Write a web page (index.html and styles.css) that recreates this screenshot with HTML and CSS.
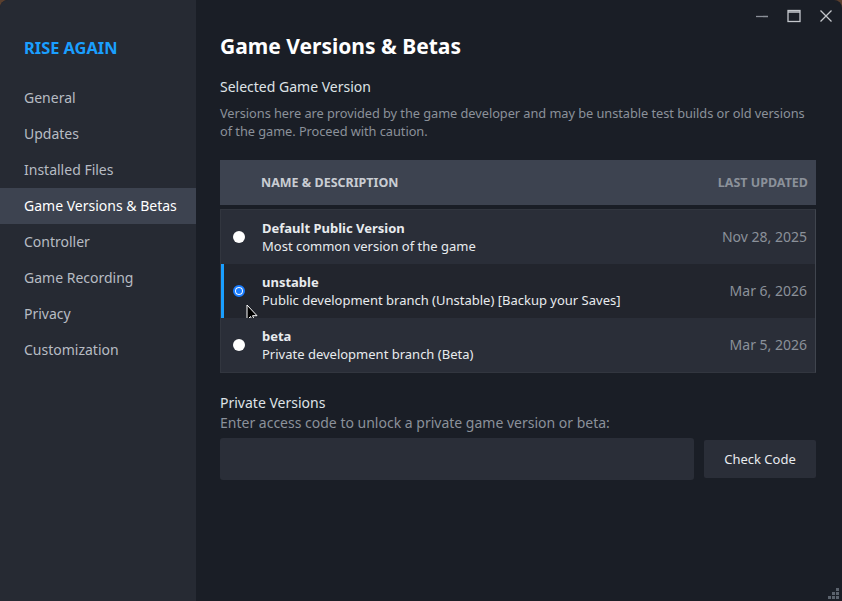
FILE: index.html
```html
<!DOCTYPE html>
<html>
<head>
<meta charset="utf-8">
<link rel="stylesheet" href="styles.css">
</head>
<body>
<div class="window">
  <aside class="sidebar">
    <div class="game-title">RISE AGAIN</div>
    <nav class="nav">
      <div class="nav-item">General</div>
      <div class="nav-item">Updates</div>
      <div class="nav-item">Installed Files</div>
      <div class="nav-item active">Game Versions &amp; Betas</div>
      <div class="nav-item">Controller</div>
      <div class="nav-item">Game Recording</div>
      <div class="nav-item">Privacy</div>
      <div class="nav-item">Customization</div>
    </nav>
  </aside>
  <main class="main">
    <div class="winctl">
      <svg width="14" height="14" viewBox="0 0 14 14"><path d="M1 7.5h12" stroke="#8b9098" stroke-width="1.3"/></svg>
      <svg width="14" height="14" viewBox="0 0 14 14"><rect x="1" y="1.5" width="12" height="11" fill="none" stroke="#c4c7cc" stroke-width="1.3"/><path d="M1 3h12" stroke="#c4c7cc" stroke-width="1.3"/></svg>
      <svg width="14" height="14" viewBox="0 0 14 14"><path d="M1.5 1.5l11 11M12.5 1.5l-11 11" stroke="#c4c7cc" stroke-width="1.3"/></svg>
    </div>
    <h1 class="title">Game Versions &amp; Betas</h1>
    <h2 class="subtitle">Selected Game Version</h2>
    <p class="desc">Versions here are provided by the game developer and may be unstable test builds or old versions of the game. Proceed with caution.</p>
    <div class="thead">
      <span class="th-name">NAME &amp; DESCRIPTION</span>
      <span class="th-date">LAST UPDATED</span>
    </div>
    <div class="tbody">
      <div class="row">
        <span class="radio"></span>
        <div class="info"><div class="name">Default Public Version</div><div class="rdesc">Most common version of the game</div></div>
        <span class="date">Nov 28, 2025</span>
      </div>
      <div class="row alt selected">
        <span class="radio on"></span>
        <div class="info"><div class="name">unstable</div><div class="rdesc">Public development branch (Unstable) [Backup your Saves]</div></div>
        <span class="date">Mar 6, 2026</span>
        <svg class="cursor" width="12" height="19" viewBox="0 0 12 19"><path d="M1 1v15l3.5-3.5 2.5 5.5 2-1-2.5-5.3H11z" fill="#000" stroke="#fff" stroke-width="1"/></svg>
      </div>
      <div class="row">
        <span class="radio"></span>
        <div class="info"><div class="name">beta</div><div class="rdesc">Private development branch (Beta)</div></div>
        <span class="date">Mar 5, 2026</span>
      </div>
    </div>
    <h2 class="subtitle private">Private Versions</h2>
    <p class="hint">Enter access code to unlock a private game version or beta:</p>
    <div class="code-row">
      <div class="code-input"></div>
      <button class="check-btn">Check Code</button>
    </div>
    <svg class="grip" width="14" height="14" viewBox="0 0 14 14" fill="#5b626c"><rect x="10" y="2" width="3" height="3"/><rect x="6" y="6" width="3" height="3"/><rect x="10" y="6" width="3" height="3"/><rect x="2" y="10" width="3" height="3"/><rect x="6" y="10" width="3" height="3"/><rect x="10" y="10" width="3" height="3"/></svg>
  </main>
</div>
</body>
</html>
```

FILE: styles.css
```css
* { box-sizing: border-box; }
html, body {
  margin: 0;
  padding: 0;
  width: 842px;
  height: 601px;
  overflow: hidden;
  background: #5a3f2e;
}
body {
  font-family: "Noto Sans", "Open Sans", Arial, sans-serif;
}
.window {
  display: flex;
  width: 842px;
  height: 601px;
  border-radius: 8px 8px 0 0;
  overflow: hidden;
  background: #1a1e26;
}
.sidebar {
  width: 196px;
  flex: none;
  background: #262a33;
  padding-top: 36px;
}
.game-title {
  color: #1a9fff;
  font-weight: 700;
  font-size: 16.4px;
  line-height: 24px;
  padding-left: 24px;
}
.nav {
  margin-top: 20px;
}
.nav-item {
  height: 36px;
  line-height: 36px;
  padding-left: 24px;
  color: #b7bcc3;
  font-size: 14px;
}
.nav-item.active {
  background: #3d4350;
  color: #ffffff;
}
.main {
  flex: 1;
  position: relative;
  padding: 0 26px 0 24px;
}
.winctl {
  position: absolute;
  top: 9px;
  right: 9px;
  display: flex;
  gap: 18px;
}
.title {
  margin: 32px 0 0;
  font-size: 21px;
  line-height: 28px;
  font-weight: 700;
  color: #ffffff;
}
.subtitle {
  margin: 17px 0 0;
  font-size: 14px;
  line-height: 20px;
  font-weight: 400;
  color: #dfe3e6;
}
.desc {
  margin: 7px 0 0;
  font-size: 12.8px;
  line-height: 18px;
  letter-spacing: -0.05px;
  color: #8b919a;
}
.thead {
  margin-top: 20px;
  height: 45px;
  background: #3d4350;
  display: flex;
  align-items: center;
  justify-content: space-between;
  padding: 0 8px 0 41px;
  font-size: 12.5px;
  font-weight: 700;
}
.th-name { color: #c9cdd3; }
.th-date { color: #8b919a; }
.tbody {
  margin-top: 4px;
  border: 1px solid #32363f;
  border-right-color: #40454e;
}
.row {
  position: relative;
  height: 54px;
  display: flex;
  align-items: center;
  background: #2a2e38;
  padding: 0 8px 0 12px;
}
.row.alt { background: #22252d; }
.row.selected { box-shadow: inset 3px 0 0 #1a9fff; }
.radio {
  width: 12px;
  height: 12px;
  border-radius: 50%;
  background: #ffffff;
  flex: none;
}
.radio.on {
  background: #ffffff;
  border: 2px solid #1a7dff;
  box-shadow: inset 0 0 0 1px #ffffff, inset 0 0 0 6px #1a7dff;
}
.info {
  margin-left: 17px;
  flex: 1;
}
.name {
  font-size: 13px;
  line-height: 18px;
  font-weight: 700;
  color: #e8ebee;
}
.rdesc {
  font-size: 13px;
  line-height: 18px;
  color: #e8ebee;
}
.date {
  font-size: 14px;
  color: #8b919a;
  margin-top: -1px;
}
.cursor {
  position: absolute;
  left: 25px;
  top: 40px;
}
.private { margin-top: 20px; }
.hint {
  margin: 0;
  font-size: 14px;
  line-height: 20px;
  color: #8b919a;
}
.code-row {
  margin-top: 5px;
  display: flex;
  align-items: center;
  gap: 10px;
}
.code-input {
  flex: 1;
  height: 42px;
  background: #2a2e38;
  border-radius: 3px;
}
.check-btn {
  width: 112px;
  height: 38px;
  border: none;
  border-radius: 2px;
  background: #2a2e38;
  color: #e8ebee;
  font-family: inherit;
  font-size: 13px;
}
.grip {
  position: absolute;
  right: 2px;
  bottom: 1px;
}
```
